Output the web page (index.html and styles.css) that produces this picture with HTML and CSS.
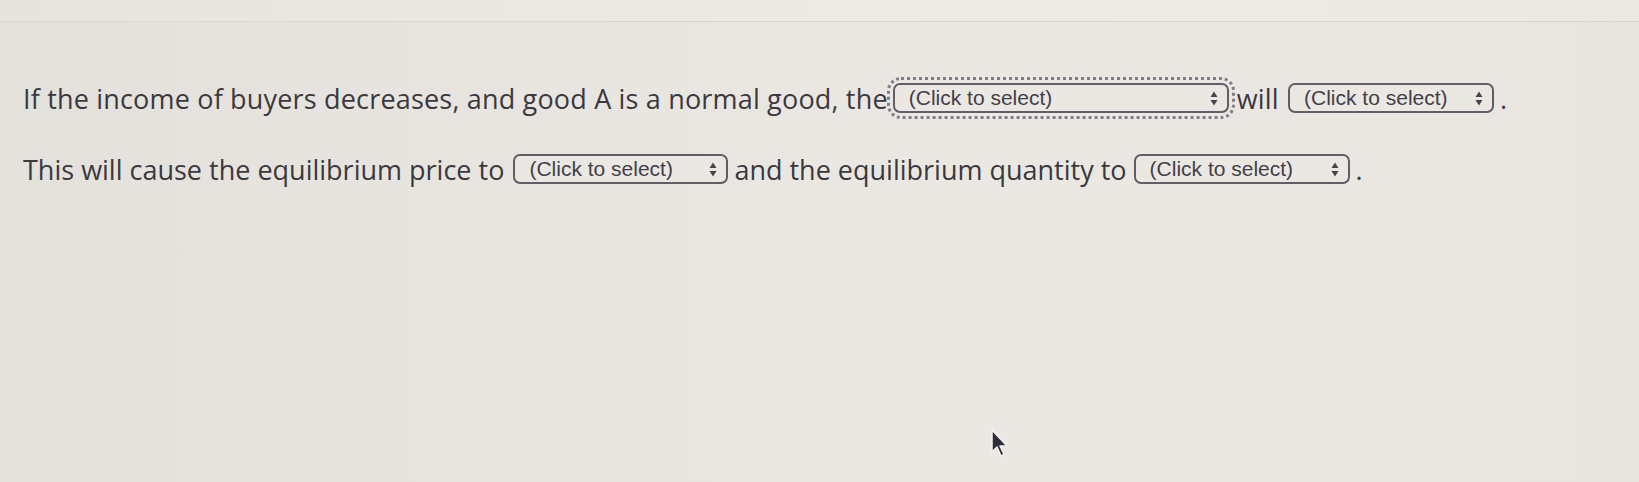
FILE: index.html
```html
<!DOCTYPE html>
<html lang="en">
<head>
<meta charset="utf-8">
<title>Question</title>
<link rel="stylesheet" href="styles.css">
</head>
<body>
<div class="topbar"></div>
<main class="question">
  <p class="line line-1">If the income of buyers decreases, and good A is a normal good, the<span class="focus-ring"><span class="select select-wide"><span class="select-label">(Click to select)</span><svg class="arrows" viewBox="0 0 8 17" width="8" height="17"><path d="M4 1.5 L7.5 7 H0.5 Z M4 15.5 L7.5 10 H0.5 Z" fill="#46434c"/></svg></span></span>will <span class="select select-2"><span class="select-label">(Click to select)</span><svg class="arrows" viewBox="0 0 8 17" width="8" height="17"><path d="M4 1.5 L7.5 7 H0.5 Z M4 15.5 L7.5 10 H0.5 Z" fill="#46434c"/></svg></span>.</p>
  <p class="line line-2">This will cause the equilibrium price to <span class="select select-3"><span class="select-label">(Click to select)</span><svg class="arrows" viewBox="0 0 8 17" width="8" height="17"><path d="M4 1.5 L7.5 7 H0.5 Z M4 15.5 L7.5 10 H0.5 Z" fill="#46434c"/></svg></span>and the equilibrium quantity to <span class="select select-4"><span class="select-label">(Click to select)</span><svg class="arrows" viewBox="0 0 8 17" width="8" height="17"><path d="M4 1.5 L7.5 7 H0.5 Z M4 15.5 L7.5 10 H0.5 Z" fill="#46434c"/></svg></span>.</p>
</main>
<svg class="cursor" viewBox="0 0 20 30" width="20" height="30"><path d="M2 2 L2 24 L7 19 L11 28 L14 26.5 L10 18 L17 18 Z" fill="#2e2e3e" stroke="#f4f2ee" stroke-width="1.5" stroke-linejoin="round"/></svg>
</body>
</html>
```

FILE: styles.css
```css
html, body {
  margin: 0;
  padding: 0;
}
body {
  width: 1639px;
  height: 482px;
  overflow: hidden;
  position: relative;
  background: linear-gradient(90deg, #e4e1dc 0%, #e8e5e0 30%, #ebe8e3 60%, #e9e6e1 100%);
  font-family: "Open Sans", Lato, sans-serif;
  color: #3b393e;
}
.topbar {
  height: 21px;
  border-bottom: 1px solid #d9d6d1;
  background: rgba(255, 255, 255, 0.12);
}
.question {
  padding: 0 0 0 23px;
}
.line {
  margin: 0;
  font-size: 27px;
  display: flex;
  align-items: center;
  white-space: pre;
}
.line-1 {
  height: 50px;
  margin-top: 51px;
  letter-spacing: 0.18px;
}
.line-2 {
  height: 50px;
  margin-top: 21px;
}
.select {
  display: inline-flex;
  align-items: center;
  justify-content: space-between;
  box-sizing: border-box;
  height: 30px;
  border: 2px solid #625e68;
  border-radius: 7px;
  padding: 0 9px 0 14px;
  background: #ebe8e4;
  font-family: "Liberation Sans", Arial, sans-serif;
  font-size: 21px;
  letter-spacing: 0;
  color: #423f48;
}
.select-label {
  white-space: pre;
}
.arrows {
  flex: none;
}
.focus-ring {
  display: inline-flex;
  margin: 0 8px 0 5px;
  outline: 3px dotted #807d88;
  outline-offset: 3px;
  border-radius: 8px;
}
.select-wide {
  width: 336px;
}
.select-2 {
  width: 206px;
  margin-left: 2px;
  margin-right: 6px;
}
.select-3 {
  width: 215px;
  margin-left: 2px;
  margin-right: 6px;
}
.select-4 {
  width: 216px;
  margin-left: 0;
  margin-right: 6px;
}
.cursor {
  position: absolute;
  left: 990px;
  top: 428px;
}
```
